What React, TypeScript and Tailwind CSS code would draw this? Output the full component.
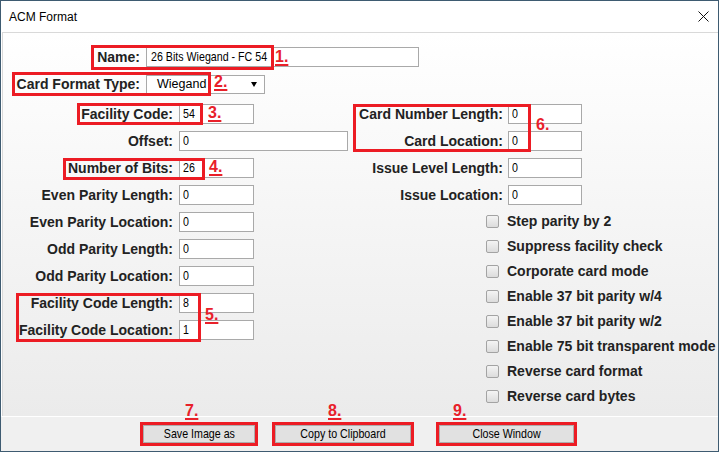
import React from 'react';

type Field = { label: string; value: string; wide?: boolean };

const leftFields: Field[] = [
  { label: 'Facility Code:', value: '54' },
  { label: 'Offset:', value: '0', wide: true },
  { label: 'Number of Bits:', value: '26' },
  { label: 'Even Parity Length:', value: '0' },
  { label: 'Even Parity Location:', value: '0' },
  { label: 'Odd Parity Length:', value: '0' },
  { label: 'Odd Parity Location:', value: '0' },
  { label: 'Facility Code Length:', value: '8' },
  { label: 'Facility Code Location:', value: '1' },
];

const rightFields: Field[] = [
  { label: 'Card Number Length:', value: '0' },
  { label: 'Card Location:', value: '0' },
  { label: 'Issue Level Length:', value: '0' },
  { label: 'Issue Location:', value: '0' },
];

const options = [
  'Step parity by 2',
  'Suppress facility check',
  'Corporate card mode',
  'Enable 37 bit parity w/4',
  'Enable 37 bit parity w/2',
  'Enable 75 bit transparent mode',
  'Reverse card format',
  'Reverse card bytes',
];

// narrow-looking text: 13px Liberation Sans squeezed horizontally
const Narrow = ({ children }: { children: React.ReactNode }) => (
  <span className="inline-block origin-left scale-x-[0.82] whitespace-nowrap text-[13px] font-normal text-black">
    {children}
  </span>
);

const TextBox = ({ value, className = '' }: { value: string; className?: string }) => (
  <div className={`flex h-[20px] items-center overflow-hidden border border-[#a9a9a9] bg-white pl-[3px] ${className}`}>
    <Narrow>{value}</Narrow>
  </div>
);

const Button = ({ children, width }: { children: React.ReactNode; width: string }) => (
  <div className="border-[3px] border-[#ec1c24]">
    <button className={`flex h-[18px] items-center justify-center border border-[#adadad] bg-[#e1e1e1] ${width}`}>
      <span className="inline-block scale-x-[0.82] whitespace-nowrap text-[13px] text-black">{children}</span>
    </button>
  </div>
);

export default function App() {
  const num = "absolute font-bold text-[16px] leading-[16px] text-[#e8202a] underline decoration-[1.5px] underline-offset-[2px]";
  return (
    <div className="relative h-[452px] w-[719px] font-['Liberation_Sans',Arial,sans-serif] text-[#222]">
      <div className="flex h-full flex-col border border-[#3e5b71] bg-white">
        {/* title bar */}
        <div className="flex h-[31px] shrink-0 items-center justify-between pl-[8px] pr-[9px]">
          <span className="text-[12px] text-black">ACM Format</span>
          <svg width="11" height="11" viewBox="0 0 11 11">
            <path d="M0.5 0.5 L10.5 10.5 M10.5 0.5 L0.5 10.5" stroke="#111" strokeWidth="1" />
          </svg>
        </div>

        {/* form panel */}
        <div className="ml-[1px] flex flex-1 flex-col border-l border-t border-[#d9d9d9] bg-gradient-to-b from-white to-[#ebebeb] pt-[14px] text-[14px] font-bold">
          <div className="flex h-[20px] items-center">
            <span className="w-[137px] text-right">Name:</span>
            <TextBox value="26 Bits Wiegand - FC 54" className="ml-[6px] w-[273px] pl-[4px]" />
          </div>
          <div className="mt-[7px] flex h-[20px] items-center">
            <span className="w-[137px] text-right">Card Format Type:</span>
            <div className="ml-[6px] flex h-[19px] w-[119px] items-center justify-between border border-[#a9a9a9] bg-white pl-[10px] pr-[7px] text-[12.5px] font-normal text-black">
              <span>Wiegand</span>
              <svg width="6" height="5" viewBox="0 0 6 5">
                <path d="M0 0 H6 L3 5 Z" fill="#000" />
              </svg>
            </div>
          </div>

          <div className="mt-[10px] flex">
            <div className="flex w-[350px] flex-col gap-[7px]">
              {leftFields.map((f) => (
                <div key={f.label} className="flex h-[20px] items-center">
                  <span className="w-[170px] text-right">{f.label}</span>
                  <TextBox value={f.value} className={`ml-[6px] ${f.wide ? 'w-[169px]' : 'w-[75px]'}`} />
                </div>
              ))}
            </div>

            <div className="flex flex-col">
              <div className="flex flex-col gap-[7px]">
                {rightFields.map((f) => (
                  <div key={f.label} className="flex h-[20px] items-center">
                    <span className="w-[150px] text-right">{f.label}</span>
                    <TextBox value={f.value} className="ml-[5px] w-[74px]" />
                  </div>
                ))}
              </div>
              <div className="mt-[4px] flex flex-col pl-[133px]">
                {options.map((o) => (
                  <div key={o} className="flex h-[25px] items-center">
                    <span className="h-[13px] w-[13px] rounded-[2px] border border-[#a3a3a3] bg-gradient-to-b from-[#f4f4f4] to-[#dcdcdc]" />
                    <span className="ml-[8px] whitespace-nowrap">{o}</span>
                  </div>
                ))}
              </div>
            </div>
          </div>
        </div>

        <div className="h-[1px] shrink-0 bg-white" />

        {/* footer buttons */}
        <div className="flex h-[34px] shrink-0 items-start bg-[#f0f0f0] pt-[5px]">
          <div className="relative ml-[139px]">
            <span className={`${num} -top-[19px] left-[45px]`}>7.</span>
            <Button width="w-[112px]">Save Image as</Button>
          </div>
          <div className="relative ml-[14px]">
            <span className={`${num} -top-[19px] left-[56px]`}>8.</span>
            <Button width="w-[136px]">Copy to Clipboard</Button>
          </div>
          <div className="relative ml-[22px]">
            <span className={`${num} -top-[19px] left-[17px]`}>9.</span>
            <Button width="w-[135px]">Close Window</Button>
          </div>
        </div>
      </div>

      {/* annotation overlay */}
      <div className="pointer-events-none absolute inset-0">
        <div className="absolute left-[91px] top-[45px] h-[25px] w-[183px] border-[3px] border-[#ec1c24]" />
        <span className={`${num} left-[275px] top-[49px]`}>1.</span>
        <div className="absolute left-[12px] top-[72px] h-[24px] w-[199px] border-[3px] border-[#ec1c24]" />
        <span className={`${num} left-[214px] top-[74px]`}>2.</span>
        <div className="absolute left-[77px] top-[103px] h-[22px] w-[126px] border-[3px] border-[#ec1c24]" />
        <span className={`${num} left-[208px] top-[105px]`}>3.</span>
        <div className="absolute left-[63px] top-[158px] h-[22px] w-[142px] border-[3px] border-[#ec1c24]" />
        <span className={`${num} left-[209px] top-[159px]`}>4.</span>
        <div className="absolute left-[16px] top-[293px] h-[49px] w-[185px] border-[3px] border-[#ec1c24]" />
        <span className={`${num} left-[205px] top-[307px]`}>5.</span>
        <div className="absolute left-[353px] top-[104px] h-[48px] w-[178px] border-[3px] border-[#ec1c24]" />
        <span className="absolute left-[536px] top-[117px] text-[16px] font-bold leading-[16px] text-[#e8202a]">6.</span>
      </div>
    </div>
  );
}
